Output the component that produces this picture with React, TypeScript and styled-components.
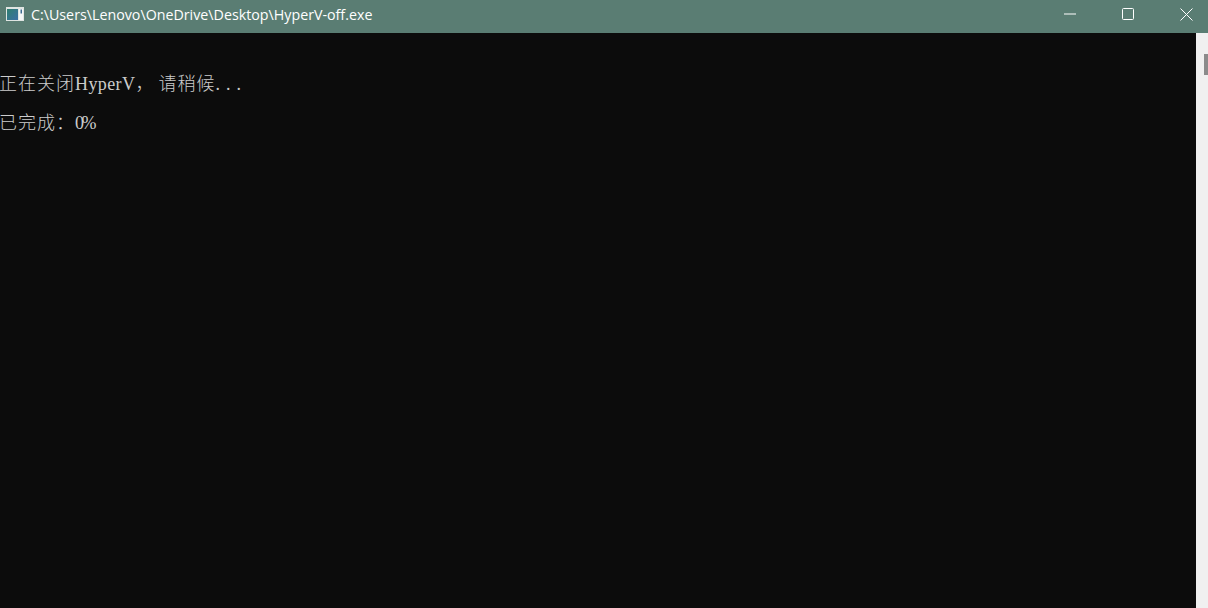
import React from "react";
import styled, { createGlobalStyle } from "styled-components";

const GlobalStyle = createGlobalStyle`
  html, body {
    margin: 0;
    padding: 0;
    background: #0c0c0c;
  }
  #root {
    height: 608px;
  }
`;

const Window = styled.div`
  width: 1208px;
  height: 608px;
  display: flex;
  flex-direction: column;
  overflow: hidden;
`;

const TitleBar = styled.div`
  height: 33px;
  flex: none;
  display: flex;
  align-items: center;
  background: #5a7d73;
  color: #ffffff;
`;

const AppIcon = styled.svg`
  width: 18px;
  height: 14px;
  margin: 0 7px 5px 6px;
  flex: none;
`;

const Title = styled.div`
  flex: 1;
  font-family: "Open Sans", "Noto Sans", sans-serif;
  font-size: 14.25px;
  line-height: 30px;
  height: 33px;
`;

const Controls = styled.div`
  display: flex;
  align-items: center;
  gap: 46px;
  padding: 0 15px 5px 0;
`;

const ControlIcon = styled.svg`
  display: block;
  flex: none;
`;

const Body = styled.div`
  flex: 1;
  display: flex;
  min-height: 0;
`;

const Console = styled.div`
  flex: 1;
  background: #0c0c0c;
  color: #cccccc;
  padding-top: 30px;
`;

const Line = styled.div`
  height: 39px;
  line-height: 39px;
  white-space: pre;
  display: flex;
  align-items: baseline;
  margin-left: -1px;
`;

const Cjk = styled.span`
  font-family: "Noto Sans CJK SC", sans-serif;
  font-size: 18px;
  font-weight: 300;
  letter-spacing: 1px;
`;

const Latin = styled.span<{ $spacing: number }>`
  font-family: "Liberation Serif", serif;
  font-size: 18px;
  letter-spacing: ${(p) => p.$spacing}px;
`;

const Comma = styled(Cjk)`
  display: inline-block;
  width: 23px;
  letter-spacing: 0;
`;

const Scrollbar = styled.div`
  width: 12px;
  flex: none;
  background: #f0f0f0;
`;

const Thumb = styled.div`
  width: 4px;
  height: 21px;
  margin: 21px 0 0 8px;
  background: #8b8b8b;
`;

export default function App() {
  return (
    <Window>
      <GlobalStyle />
      <TitleBar>
        <AppIcon viewBox="0 0 18 14">
          <defs>
            <linearGradient id="paneFill" x1="0" y1="0" x2="1" y2="1">
              <stop offset="0" stopColor="#2f7f6f" />
              <stop offset="1" stopColor="#3b6fa5" />
            </linearGradient>
          </defs>
          <rect x="0" y="0" width="18" height="14" fill="#dfe5e2" />
          <rect x="1" y="2" width="11" height="11" fill="url(#paneFill)" />
          <rect x="13" y="2" width="4" height="11" fill="#f4f6f5" />
          <rect x="14.5" y="2.5" width="1.5" height="4" fill="#3d6a8f" />
        </AppIcon>
        <Title>C:\Users\Lenovo\OneDrive\Desktop\HyperV-off.exe</Title>
        <Controls>
          <ControlIcon width="12" height="2" viewBox="0 0 12 2">
            <rect x="0" y="0.5" width="12" height="1" fill="#ffffff" />
          </ControlIcon>
          <ControlIcon width="12" height="12" viewBox="0 0 12 12">
            <rect x="0.5" y="0.5" width="11" height="11" rx="1" fill="none" stroke="#ffffff" />
          </ControlIcon>
          <ControlIcon width="13" height="13" viewBox="0 0 13 13">
            <path d="M0.5 0.5 L12.5 12.5 M12.5 0.5 L0.5 12.5" stroke="#ffffff" strokeWidth="1" fill="none" />
          </ControlIcon>
        </Controls>
      </TitleBar>
      <Body>
        <Console>
          <Line>
            <Cjk>正在关闭</Cjk>
            <Latin $spacing={0.4}>HyperV</Latin>
            <Comma>{"\uFF0C"}</Comma>
            <Cjk>请稍候</Cjk>
            <Latin $spacing={6}>...</Latin>
          </Line>
          <Line>
            <Cjk>已完成{"\uFF1A"}</Cjk>
            <Latin $spacing={-2.5}>0%</Latin>
          </Line>
        </Console>
        <Scrollbar>
          <Thumb />
        </Scrollbar>
      </Body>
    </Window>
  );
}
